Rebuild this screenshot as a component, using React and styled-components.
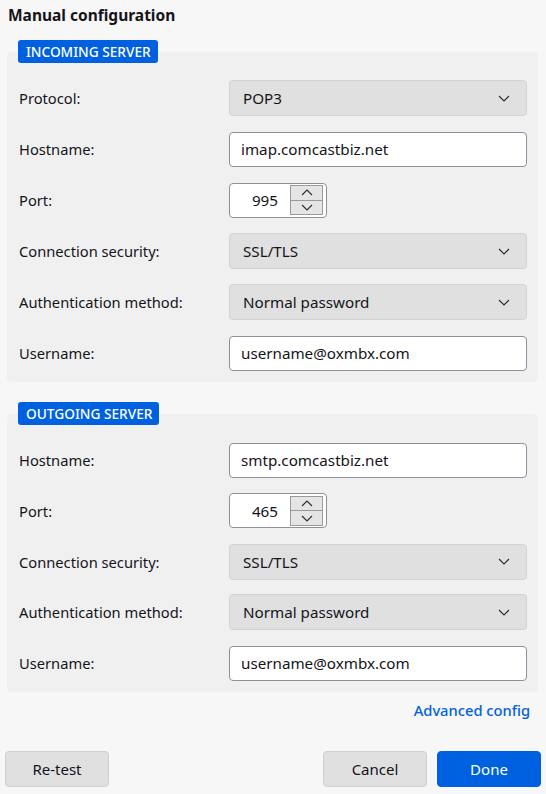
import React from "react";
import styled, { createGlobalStyle } from "styled-components";

const Global = createGlobalStyle`
  html, body { margin: 0; padding: 0; background: #f7f7f7; }
  body { font-family: "Noto Sans", "Open Sans", sans-serif; color: #15141a; }
  * { box-sizing: border-box; }
`;

const Page = styled.div`
  width: 546px;
  height: 794px;
  background: #f7f7f7;
  padding: 3px 8px 0 7px;
  display: flex;
  flex-direction: column;
`;

const Title = styled.h1`
  margin: 0 0 0 1px;
  font-size: 15.5px;
  font-weight: 700;
  line-height: 24px;
  color: #15141a;
`;

const Section = styled.section`
  display: flex;
  flex-direction: column;
  align-items: flex-start;
  margin-top: ${(p) => p.$top}px;
`;

const Badge = styled.div`
  position: relative;
  z-index: 1;
  margin-left: 11px;
  height: 23px;
  padding: 0 7px 0 8px;
  display: flex;
  align-items: center;
  background: #0061e0;
  color: #fff;
  border-radius: 3px;
  font-size: 13.7px;
  font-weight: 500;
`;

const Box = styled.div`
  align-self: stretch;
  margin-top: -11px;
  background: #f0f0f0;
  border-radius: 5px;
  padding: ${(p) => p.$pt}px 11px 11px 12px;
  display: grid;
  grid-template-columns: 210px 298px;
  grid-auto-rows: 36px;
  row-gap: ${(p) => p.$gap}px;
  align-items: center;
`;

const Label = styled.label`
  font-size: 14.7px;
  color: #15141a;
  line-height: 20px;
`;

const SelectBox = styled.div`
  height: 36px;
  border: 1px solid #d2d2d2;
  background: #e0e0e0;
  border-radius: 4px;
  display: flex;
  align-items: center;
  justify-content: space-between;
  padding: 0 16px 0 13px;
  font-size: 15.2px;
  color: #15141a;
`;

const TextInput = styled.div`
  height: 35px;
  border: 1px solid #8f8f9d;
  background: #fff;
  border-radius: 4px;
  display: flex;
  align-items: center;
  padding: 0 11px;
  font-size: 15.2px;
  color: #15141a;
`;

const PortField = styled.div`
  width: 98px;
  height: 35px;
  border: 1px solid #8f8f9d;
  background: #fff;
  border-radius: 4px;
  display: flex;
  align-items: center;
  justify-content: flex-end;
  padding: 0 3px 0 0;
  gap: 12px;
  font-size: 15.2px;
`;

const Spinner = styled.div`
  width: 33px;
  height: 30px;
  display: flex;
  flex-direction: column;
  border: 1px solid #9a9a9a;
  background: #e5e5e5;
`;

const SpinBtn = styled.div`
  flex: 1;
  display: flex;
  align-items: center;
  justify-content: center;
  border-top: ${(p) => (p.$down ? "1px solid #9a9a9a" : "none")};
`;

const Link = styled.a`
  align-self: flex-end;
  margin: 8px 8px 0 0;
  color: #0061e0;
  font-size: 14.7px;
  font-weight: 500;
  line-height: 20px;
  text-decoration: none;
`;

const Footer = styled.div`
  margin-top: auto;
  margin-bottom: 7px;
  margin-left: -2px;
  margin-right: -3px;
  display: flex;
  align-items: center;
  gap: 10px;
`;

const Button = styled.button`
  width: 104px;
  height: 36px;
  border-radius: 4px;
  font-family: inherit;
  font-size: 15px;
  border: 1px solid ${(p) => (p.$primary ? "#0061e0" : "#cfcfd8")};
  background: ${(p) => (p.$primary ? "#0061e0" : "#e0e0e0")};
  color: ${(p) => (p.$primary ? "#fff" : "#15141a")};
  margin-left: ${(p) => (p.$push ? "auto" : "0")};
`;

const Chevron = ({ up }) => (
  <svg width="12" height="7" viewBox="0 0 12 7" fill="none">
    <path
      d={up ? "M1 6 L6 1 L11 6" : "M1 1 L6 6 L11 1"}
      stroke="#2b2a33"
      strokeWidth="1.1"
    />
  </svg>
);

const Select = ({ value }) => (
  <SelectBox>
    <span>{value}</span>
    <Chevron />
  </SelectBox>
);

const Port = ({ value }) => (
  <PortField>
    <span>{value}</span>
    <Spinner>
      <SpinBtn>
        <Chevron up />
      </SpinBtn>
      <SpinBtn $down>
        <Chevron />
      </SpinBtn>
    </Spinner>
  </PortField>
);

export default function App() {
  return (
    <Page>
      <Global />
      <Title>Manual configuration</Title>
      <Section $top={13}>
        <Badge>INCOMING SERVER</Badge>
        <Box $pt={28} $gap={15}>
          <Label>Protocol:</Label>
          <Select value="POP3" />
          <Label>Hostname:</Label>
          <TextInput>imap.comcastbiz.net</TextInput>
          <Label>Port:</Label>
          <Port value="995" />
          <Label>Connection security:</Label>
          <Select value="SSL/TLS" />
          <Label>Authentication method:</Label>
          <Select value="Normal password" />
          <Label>Username:</Label>
          <TextInput>username@oxmbx.com</TextInput>
        </Box>
      </Section>
      <Section $top={20}>
        <Badge>OUTGOING SERVER</Badge>
        <Box $pt={28} $gap={14.75}>
          <Label>Hostname:</Label>
          <TextInput>smtp.comcastbiz.net</TextInput>
          <Label>Port:</Label>
          <Port value="465" />
          <Label>Connection security:</Label>
          <Select value="SSL/TLS" />
          <Label>Authentication method:</Label>
          <Select value="Normal password" />
          <Label>Username:</Label>
          <TextInput>username@oxmbx.com</TextInput>
        </Box>
      </Section>
      <Link href="#">Advanced config</Link>
      <Footer>
        <Button>Re-test</Button>
        <Button $push>Cancel</Button>
        <Button $primary>Done</Button>
      </Footer>
    </Page>
  );
}
